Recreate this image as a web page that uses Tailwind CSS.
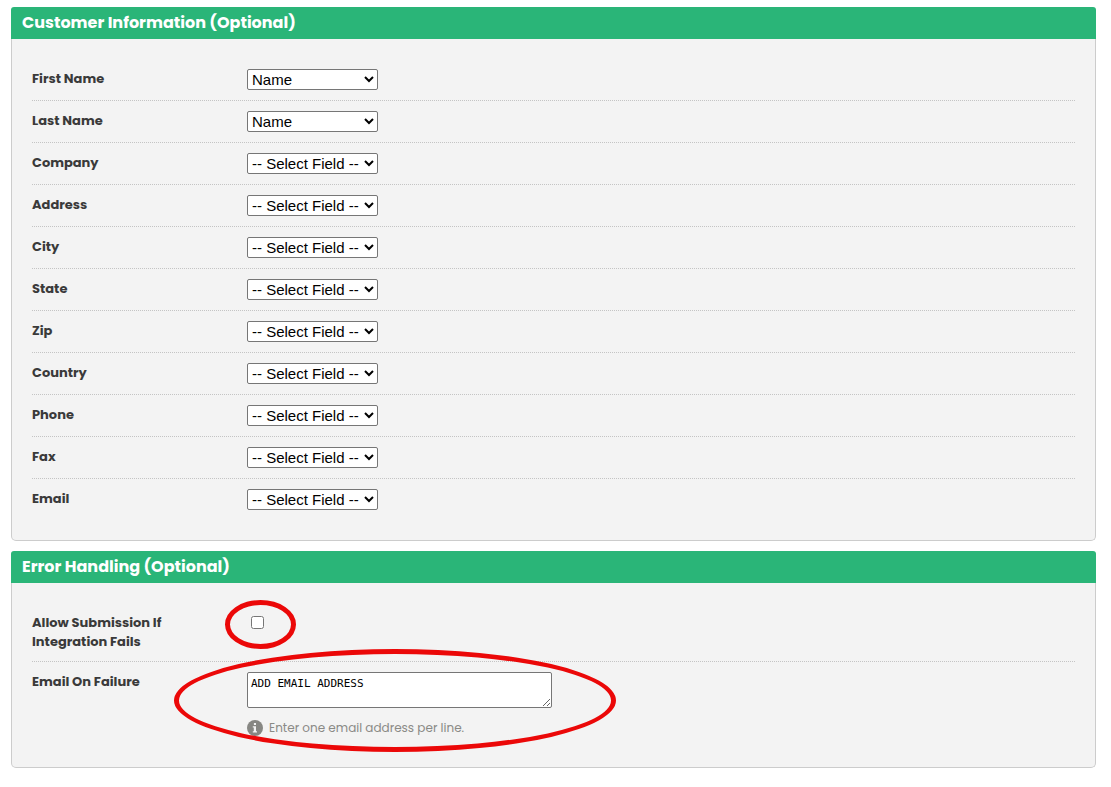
<!DOCTYPE html>
<html lang="en">
<head>
    <meta charset="UTF-8">
    <meta name="viewport" content="width=device-width, initial-scale=1.0">
    <title>Integration Settings</title>
    <script src="https://cdn.jsdelivr.net/npm/@tailwindcss/browser@4"></script>
</head>
<body class="bg-white font-[Poppins,Inter,sans-serif] text-[13px] leading-[19px] text-[#3a3a3a]">
    <main class="flex flex-col gap-[10px] pt-[7px] pl-[11px] pr-[15px] pb-5">

        <!-- Customer information -->
        <section>
            <h2 class="h-8 px-[11px] rounded-t-[3px] bg-[#2ab578] text-white text-[16px] leading-[31px] font-bold">Customer Information (Optional)</h2>
            <div class="p-5 bg-[#f3f3f3] border border-t-0 border-[#ccc] rounded-b-[5px]">
                <div class="flex py-[10px] border-b border-dotted border-[#c4c4c4]">
                    <label for="first-name" class="w-[215px] h-[21px] font-bold">First Name</label>
                    <select id="first-name" class="w-[131px] h-[21px] pr-px bg-white border border-[#767676] rounded-xs font-['Liberation_Sans',Arial,sans-serif] text-[15px] leading-[19px] text-black">
                        <option>Name</option>
                    </select>
                </div>
                <div class="flex py-[10px] border-b border-dotted border-[#c4c4c4]">
                    <label for="last-name" class="w-[215px] h-[21px] font-bold">Last Name</label>
                    <select id="last-name" class="w-[131px] h-[21px] pr-px bg-white border border-[#767676] rounded-xs font-['Liberation_Sans',Arial,sans-serif] text-[15px] leading-[19px] text-black">
                        <option>Name</option>
                    </select>
                </div>
                <div class="flex py-[10px] border-b border-dotted border-[#c4c4c4]">
                    <label for="company" class="w-[215px] h-[21px] font-bold">Company</label>
                    <select id="company" class="w-[131px] h-[21px] pr-px bg-white border border-[#767676] rounded-xs font-['Liberation_Sans',Arial,sans-serif] text-[15px] leading-[19px] text-black">
                        <option>-- Select Field --</option>
                    </select>
                </div>
                <div class="flex py-[10px] border-b border-dotted border-[#c4c4c4]">
                    <label for="address" class="w-[215px] h-[21px] font-bold">Address</label>
                    <select id="address" class="w-[131px] h-[21px] pr-px bg-white border border-[#767676] rounded-xs font-['Liberation_Sans',Arial,sans-serif] text-[15px] leading-[19px] text-black">
                        <option>-- Select Field --</option>
                    </select>
                </div>
                <div class="flex py-[10px] border-b border-dotted border-[#c4c4c4]">
                    <label for="city" class="w-[215px] h-[21px] font-bold">City</label>
                    <select id="city" class="w-[131px] h-[21px] pr-px bg-white border border-[#767676] rounded-xs font-['Liberation_Sans',Arial,sans-serif] text-[15px] leading-[19px] text-black">
                        <option>-- Select Field --</option>
                    </select>
                </div>
                <div class="flex py-[10px] border-b border-dotted border-[#c4c4c4]">
                    <label for="state" class="w-[215px] h-[21px] font-bold">State</label>
                    <select id="state" class="w-[131px] h-[21px] pr-px bg-white border border-[#767676] rounded-xs font-['Liberation_Sans',Arial,sans-serif] text-[15px] leading-[19px] text-black">
                        <option>-- Select Field --</option>
                    </select>
                </div>
                <div class="flex py-[10px] border-b border-dotted border-[#c4c4c4]">
                    <label for="zip" class="w-[215px] h-[21px] font-bold">Zip</label>
                    <select id="zip" class="w-[131px] h-[21px] pr-px bg-white border border-[#767676] rounded-xs font-['Liberation_Sans',Arial,sans-serif] text-[15px] leading-[19px] text-black">
                        <option>-- Select Field --</option>
                    </select>
                </div>
                <div class="flex py-[10px] border-b border-dotted border-[#c4c4c4]">
                    <label for="country" class="w-[215px] h-[21px] font-bold">Country</label>
                    <select id="country" class="w-[131px] h-[21px] pr-px bg-white border border-[#767676] rounded-xs font-['Liberation_Sans',Arial,sans-serif] text-[15px] leading-[19px] text-black">
                        <option>-- Select Field --</option>
                    </select>
                </div>
                <div class="flex py-[10px] border-b border-dotted border-[#c4c4c4]">
                    <label for="phone" class="w-[215px] h-[21px] font-bold">Phone</label>
                    <select id="phone" class="w-[131px] h-[21px] pr-px bg-white border border-[#767676] rounded-xs font-['Liberation_Sans',Arial,sans-serif] text-[15px] leading-[19px] text-black">
                        <option>-- Select Field --</option>
                    </select>
                </div>
                <div class="flex py-[10px] border-b border-dotted border-[#c4c4c4]">
                    <label for="fax" class="w-[215px] h-[21px] font-bold">Fax</label>
                    <select id="fax" class="w-[131px] h-[21px] pr-px bg-white border border-[#767676] rounded-xs font-['Liberation_Sans',Arial,sans-serif] text-[15px] leading-[19px] text-black">
                        <option>-- Select Field --</option>
                    </select>
                </div>
                <div class="flex py-[10px]">
                    <label for="email" class="w-[215px] h-[21px] font-bold">Email</label>
                    <select id="email" class="w-[131px] h-[21px] pr-px bg-white border border-[#767676] rounded-xs font-['Liberation_Sans',Arial,sans-serif] text-[15px] leading-[19px] text-black">
                        <option>-- Select Field --</option>
                    </select>
                </div>
            </div>
        </section>

        <!-- Error handling -->
        <section>
            <h2 class="h-8 px-[11px] rounded-t-[3px] bg-[#2ab578] text-white text-[16px] leading-[31px] font-bold">Error Handling (Optional)</h2>
            <div class="p-5 bg-[#f3f3f3] border border-t-0 border-[#ccc] rounded-b-[5px]">
                <div class="flex py-[10px] border-b border-dotted border-[#c4c4c4]">
                    <label for="allow-submission" class="w-[215px] pr-10 font-bold">Allow Submission If<br>Integration Fails</label>
                    <div class="relative pl-1">
                        <input id="allow-submission" type="checkbox" class="block w-[13px] h-[13px] mt-[3px]">
                        <!-- highlight ring -->
                        <span class="absolute -left-[22px] -top-[13px] w-[71px] h-[49px] border-5 border-[#eb0808] rounded-[50%] pointer-events-none"></span>
                    </div>
                </div>
                <div class="flex py-[10px]">
                    <label for="email-failure" class="w-[215px] font-bold">Email On Failure</label>
                    <div class="relative flex flex-col gap-[10px]">
                        <textarea id="email-failure" aria-describedby="email-hint" class="block w-[305px] h-9 px-[3px] py-1 bg-white border border-[#767676] rounded-xs font-['DejaVu_Sans_Mono',monospace] text-[11px] leading-[13px] text-black">ADD EMAIL ADDRESS</textarea>
                        <p id="email-hint" class="flex items-center gap-[6px] text-[12px] text-[#8a8a86]">
                            <svg class="w-4 h-4" viewBox="0 0 16 16" aria-hidden="true">
                                <circle cx="8" cy="8" r="8" fill="#878783"/>
                                <path d="M6.9 3h2.1v2H6.9zM5.8 6.2H9v5h1v1.4H5.8v-1.4h1V7.6h-1z" fill="#f3f3f3"/>
                            </svg>
                            Enter one email address per line.
                        </p>
                        <span class="absolute -left-[73px] -top-[23px] w-[442px] h-[103px] border-5 border-[#eb0808] rounded-[50%] pointer-events-none"></span>
                    </div>
                </div>
            </div>
        </section>

    </main>
</body>
</html>
